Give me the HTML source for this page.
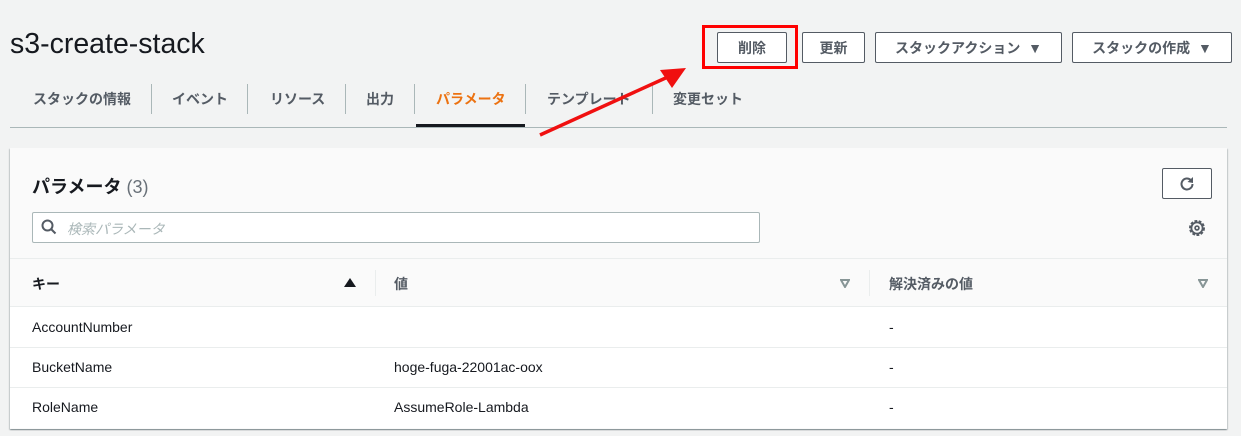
<!DOCTYPE html>
<html><head><meta charset="utf-8"><style>
*{margin:0;padding:0;box-sizing:border-box}
body{width:1241px;height:436px;background:#f2f3f3;position:relative;overflow:hidden;font-family:"Liberation Sans","Noto Sans CJK JP",sans-serif;color:#16191f}
.a{position:absolute;white-space:nowrap}
.btn{position:absolute;top:32px;height:31px;border:1px solid #545b64;border-radius:2px;background:#fff;color:#545b64;font-weight:bold;font-size:14px;display:flex;align-items:center;justify-content:center}
.tab{position:absolute;top:89px;font-size:14px;font-weight:bold;color:#545b64}
.sep{position:absolute;top:84px;width:1px;height:30px;background:#aab7b8}
.hl{position:absolute;left:10px;width:1217px;height:1px;background:#eaeded}
.cell{position:absolute;font-size:14px;color:#16191f}
</style></head><body>
<div class="a" style="left:10px;top:28px;font-size:28.5px;color:#16191f">s3-create-stack</div>

<div class="btn" style="left:717px;width:70px">削除</div>
<div class="btn" style="left:802px;width:63px">更新</div>
<div class="btn" style="left:875px;width:187px">スタックアクション&nbsp;&nbsp;▼</div>
<div class="btn" style="left:1072px;width:160px">スタックの作成&nbsp;&nbsp;▼</div>
<div class="a" style="left:702px;top:25px;width:96px;height:44px;border:3px solid #f00"></div>

<div class="tab" style="left:33px">スタックの情報</div>
<div class="sep" style="left:151px"></div>
<div class="tab" style="left:172px">イベント</div>
<div class="sep" style="left:247px"></div>
<div class="tab" style="left:270px">リソース</div>
<div class="sep" style="left:345px"></div>
<div class="tab" style="left:366px">出力</div>
<div class="sep" style="left:414px"></div>
<div class="tab" style="left:436px;color:#ec7211">パラメータ</div>
<div class="sep" style="left:525px"></div>
<div class="tab" style="left:547px">テンプレート</div>
<div class="sep" style="left:652px"></div>
<div class="tab" style="left:673px">変更セット</div>
<div class="a" style="left:416px;top:124px;width:109px;height:3px;background:#16191f"></div>
<div class="a" style="left:10px;top:127px;width:1217px;height:1px;background:#aab7b8"></div>

<svg class="a" style="left:0;top:0" width="1241" height="436"><line x1="540" y1="135" x2="670" y2="76" stroke="#f01010" stroke-width="3.5"/><polygon points="686,68 660,70 672,88" fill="#f01010"/></svg>

<div class="a" style="left:10px;top:148px;width:1217px;height:281px;background:#fafafa;box-shadow:0 1px 1px rgba(0,28,36,.3),1px 1px 1px rgba(0,28,36,.15),-1px 1px 1px rgba(0,28,36,.15)"></div>
<div class="a" style="left:32px;top:173px;font-size:18px;font-weight:bold">パラメータ <span style="font-weight:normal;color:#687078">(3)</span></div>
<div class="a" style="left:1162px;top:168px;width:50px;height:31px;border:1px solid #545b64;border-radius:2px;background:#fff"></div>
<svg class="a" style="left:1178px;top:175px" width="18" height="18" viewBox="0 0 18 18"><path d="M14.5 9a5.5 5.5 0 1 1-1.6-3.9" fill="none" stroke="#545b64" stroke-width="2"/><polygon points="15,2 15,8 9.5,7" fill="#545b64"/></svg>
<div class="a" style="left:32px;top:212px;width:728px;height:31px;border:1px solid #aab7b8;border-radius:2px;background:#fff"></div>
<svg class="a" style="left:41px;top:219px" width="16" height="16" viewBox="0 0 16 16"><circle cx="6.5" cy="6.5" r="5" fill="none" stroke="#545b64" stroke-width="2"/><line x1="10" y1="10" x2="14.5" y2="14.5" stroke="#545b64" stroke-width="2"/></svg>
<div class="a" style="left:67px;top:219px;font-size:14px;font-style:italic;color:#aab7b8">検索パラメータ</div>
<svg class="a" style="left:1188px;top:219px" width="18" height="18" viewBox="0 0 16 16"><circle cx="8" cy="8" r="6" fill="none" stroke="#545b64" stroke-width="2.2" stroke-dasharray="2.4 1.3"/><circle cx="8" cy="8" r="5" fill="none" stroke="#545b64" stroke-width="1.6"/><circle cx="8" cy="8" r="1.7" fill="none" stroke="#545b64" stroke-width="1.5"/></svg>

<div class="hl" style="top:258px"></div>
<div class="cell" style="left:32px;top:274px;font-weight:bold">キー</div>
<svg class="a" style="left:344px;top:278px" width="12" height="10"><polygon points="0,9 12,9 6,0" fill="#16191f"/></svg>
<div class="a" style="left:375px;top:270px;width:1px;height:26px;background:#eaeded"></div>
<div class="cell" style="left:394px;top:274px;font-weight:bold;color:#545b64">値</div>
<svg class="a" style="left:840px;top:279px" width="10" height="9"><polygon points="1,1 9,1 5,8" fill="none" stroke="#879596" stroke-width="2"/></svg>
<div class="a" style="left:869px;top:270px;width:1px;height:26px;background:#eaeded"></div>
<div class="cell" style="left:889px;top:274px;font-weight:bold;color:#545b64">解決済みの値</div>
<svg class="a" style="left:1198px;top:279px" width="10" height="9"><polygon points="1,1 9,1 5,8" fill="none" stroke="#879596" stroke-width="2"/></svg>

<div class="a" style="left:10px;top:307px;width:1217px;height:121px;background:#fff"></div>
<div class="hl" style="top:306px"></div>
<div class="hl" style="top:347px"></div>
<div class="hl" style="top:387px"></div>
<div class="cell" style="left:32px;top:319px">AccountNumber</div>
<div class="cell" style="left:889px;top:319px">-</div>
<div class="cell" style="left:32px;top:359px">BucketName</div>
<div class="cell" style="left:394px;top:359px">hoge-fuga-22001ac-oox</div>
<div class="cell" style="left:889px;top:359px">-</div>
<div class="cell" style="left:32px;top:399px">RoleName</div>
<div class="cell" style="left:394px;top:399px">AssumeRole-Lambda</div>
<div class="cell" style="left:889px;top:399px">-</div>
</body></html>
